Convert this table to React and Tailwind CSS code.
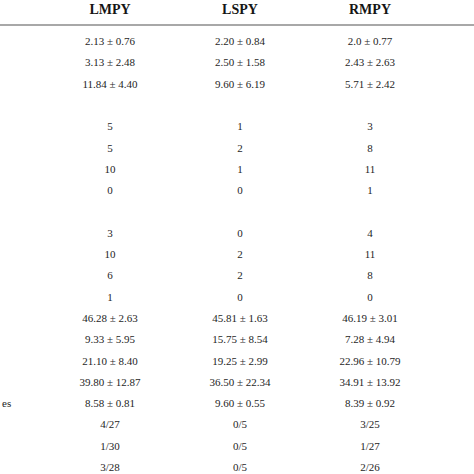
import React from 'react';

const rows = [
  ['', '2.13 ± 0.76', '2.20 ± 0.84', '2.0 ± 0.77', ''],
  ['', '3.13 ± 2.48', '2.50 ± 1.58', '2.43 ± 2.63', ''],
  ['', '11.84 ± 4.40', '9.60 ± 6.19', '5.71 ± 2.42', ''],
  ['', '', '', '', ''],
  ['', '5', '1', '3', ''],
  ['', '5', '2', '8', ''],
  ['', '10', '1', '11', ''],
  ['', '0', '0', '1', ''],
  ['', '', '', '', ''],
  ['', '3', '0', '4', ''],
  ['', '10', '2', '11', ''],
  ['', '6', '2', '8', ''],
  ['', '1', '0', '0', ''],
  ['', '46.28 ± 2.63', '45.81 ± 1.63', '46.19 ± 3.01', ''],
  ['', '9.33 ± 5.95', '15.75 ± 8.54', '7.28 ± 4.94', ''],
  ['', '21.10 ± 8.40', '19.25 ± 2.99', '22.96 ± 10.79', ''],
  ['', '39.80 ± 12.87', '36.50 ± 22.34', '34.91 ± 13.92', '33.10 ± 12.40'],
  ['es', '8.58 ± 0.81', '9.60 ± 0.55', '8.39 ± 0.92', ''],
  ['', '4/27', '0/5', '3/25', ''],
  ['', '1/30', '0/5', '1/27', ''],
  ['', '3/28', '0/5', '2/26', ''],
];

const heads = ['', 'LMPY', 'LSPY', 'RMPY', ''];

export default function App() {
  return (
    <div
      className="w-[474px] h-[474px] overflow-hidden bg-white text-[#1e1e1e]"
      style={{ fontFamily: '"Liberation Serif", "Times New Roman", serif' }}
    >
      <div className="w-[575px]">
        <div className="grid grid-cols-[45px_130px_130px_130px_140px] h-[26px] border-b-2 border-[#a8a8a8] text-[14px] font-bold leading-[20px] text-[#151515]">
          {heads.map((h, i) => (
            <div key={i} className="text-center">{h}</div>
          ))}
        </div>
        <div className="pt-[5px]">
          {rows.map((r, idx) => (
            <div key={idx} className="grid grid-cols-[45px_130px_130px_130px_140px] h-[21.3px] items-center text-[11px] leading-none">
              {r.map((c, i) => (
                <div key={i} className={i === 0 ? 'pl-[2px] text-left' : 'text-center whitespace-nowrap'}>{c}</div>
              ))}
            </div>
          ))}
        </div>
      </div>
    </div>
  );
}
